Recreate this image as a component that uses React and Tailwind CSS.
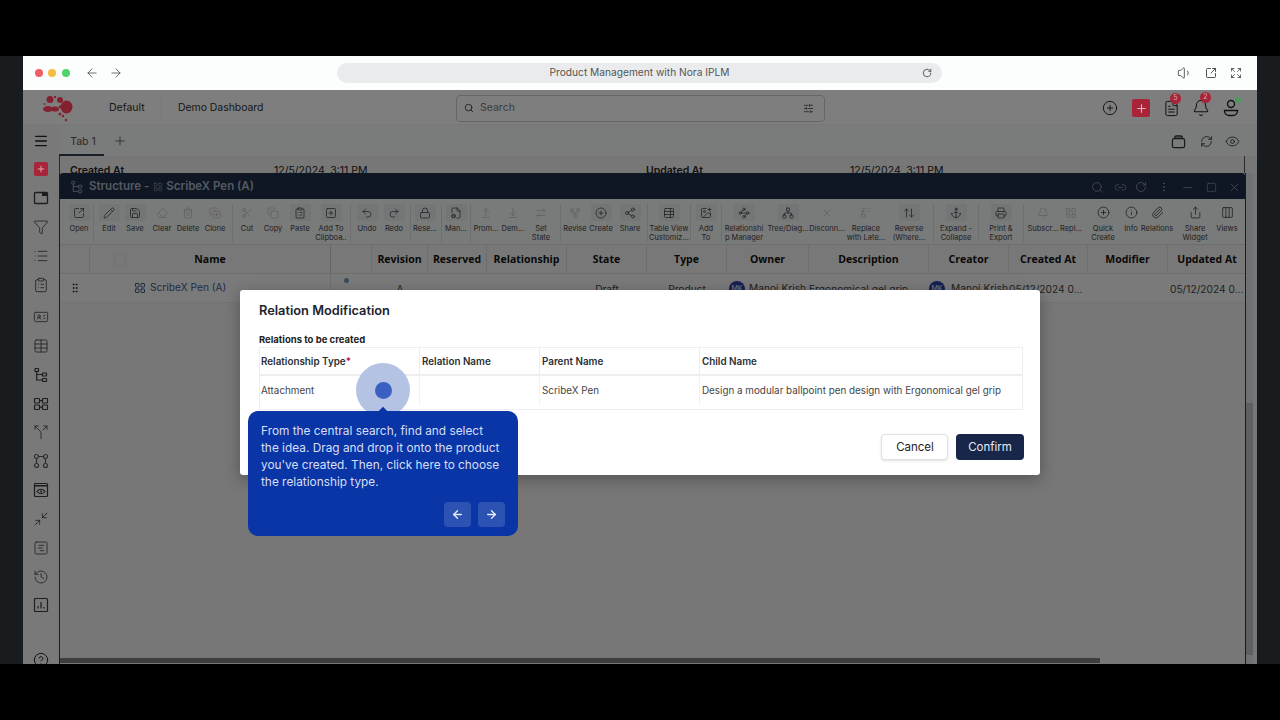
import React from "react";
import {
  ArrowLeft, ArrowRight, RotateCw, Volume1, SquareArrowOutUpRight, Search, SlidersHorizontal, CirclePlus, Plus, FileText, Bell, Menu, RefreshCw, Eye,
  Pencil, Save, Eraser, Trash2, CopyPlus, Scissors, Copy, ClipboardList, SquarePlus, Undo2, Redo2, Lock, FileCog, ArrowUpFromLine, ArrowDownToLine, ArrowRightLeft, GitFork, Share2, TableProperties, ImagePlus, Waypoints, Network, X, Replace, ArrowUpDown, Anchor, Printer, LayoutGrid, Info, Paperclip, Share, Columns3,
  Filter, List, IdCard, Table, Split, Minimize2, SquareChartGantt, History, CircleHelp, Link2, MoreVertical, Minus, Square, GripVertical, Expand,
} from "lucide-react";

function TreeIcon({ size = 16, strokeWidth = 1.3, className = "" }) {
  return (
    <svg width={size} height={size} viewBox="0 0 16 16" fill="none" stroke="currentColor" strokeWidth={strokeWidth} className={className}>
      <rect x="2" y="1.5" width="3.5" height="3" rx="0.6" /><rect x="9.5" y="6" width="4" height="3" rx="0.6" /><rect x="9.5" y="11.5" width="4" height="3" rx="0.6" />
      <path d="M3.7 4.5V13H9.5M3.7 7.5H9.5" />
    </svg>
  );
}
function WindowIcon({ size = 16, className = "" }) {
  return (
    <svg width={size} height={size} viewBox="0 0 16 16" fill="none" stroke="currentColor" strokeWidth="1.3" className={className}>
      <rect x="1.5" y="2.5" width="13" height="11" rx="1" /><path d="M9 3h5v3H9z" fill="currentColor" stroke="none" />
    </svg>
  );
}
function GridIcon({ size = 16, className = "" }) {
  return (
    <svg width={size} height={size} viewBox="0 0 16 16" fill="none" stroke="currentColor" strokeWidth="1.2" className={className}>
      <rect x="1.5" y="2.5" width="5" height="4.5" rx="0.8" /><rect x="9.5" y="2.5" width="5" height="4.5" rx="0.8" /><rect x="1.5" y="9" width="5" height="4.5" rx="0.8" /><rect x="9.5" y="9" width="5" height="4.5" rx="0.8" /><path d="M6.5 4.7h3M6.5 11.2h3" />
    </svg>
  );
}
function NodesIcon({ size = 16, className = "" }) {
  return (
    <svg width={size} height={size} viewBox="0 0 16 16" fill="none" stroke="#5a5a5a" strokeWidth="1.2" className={className}>
      <circle cx="3.5" cy="3.5" r="2" /><circle cx="12.5" cy="3.5" r="2" /><circle cx="3.5" cy="12.5" r="2" /><circle cx="12.5" cy="12.5" r="2" /><path d="M5.5 3.5h5M3.5 5.5v5M12.5 5.5v5" />
    </svg>
  );
}
function EyeWindowIcon({ size = 16, className = "" }) {
  return (
    <svg width={size} height={size} viewBox="0 0 16 16" fill="none" stroke="currentColor" strokeWidth="1.2" className={className}>
      <rect x="1.5" y="1.5" width="13" height="13" rx="1" /><path d="M2 3h12v1.5H2z" fill="currentColor" stroke="none" /><path d="M4 9.5c2.2-3 5.8-3 8 0-2.2 3-5.8 3-8 0z" /><circle cx="8" cy="9.5" r="1" fill="currentColor" stroke="none" />
    </svg>
  );
}
function ChartBoxIcon({ size = 16, className = "" }) {
  return (
    <svg width={size} height={size} viewBox="0 0 16 16" fill="none" stroke="currentColor" strokeWidth="1.2" className={className}>
      <rect x="1.5" y="1.5" width="13" height="13" rx="1" /><path d="M5 11.5V9M8 11.5V5M11 11.5v-1.5" />
    </svg>
  );
}
function CaseIcon({ size = 16, className = "" }) {
  return (
    <svg width={size} height={size} viewBox="0 0 16 16" fill="none" stroke="currentColor" strokeWidth="1.3" className={className}>
      <rect x="1.5" y="5" width="13" height="9.5" rx="1.8" /><path d="M4 5V3.5C4 2.5 4.8 2 5.5 2h5c.7 0 1.5.5 1.5 1.5V5" fill="currentColor" fillOpacity="0.45" />
    </svg>
  );
}
function PersonIcon({ size = 18, className = "" }) {
  return (
    <svg width={size} height={size} viewBox="0 0 18 18" fill="none" stroke="currentColor" strokeWidth="1.4" className={className}>
      <circle cx="9" cy="5" r="3.5" /><path d="M2.5 11.5h13c0 3.5-2.5 5-4.5 5H7c-2 0-4.5-1.5-4.5-5z" />
    </svg>
  );
}

const groups = [
  { cls: "w-[29px]", items: [["Open", SquareArrowOutUpRight, "w-[28px]"]] },
  { cls: "w-[139px]", items: [["Edit", Pencil, "w-[30px]"], ["Save", Save, "w-[22px]"], ["Clear", Eraser, "w-[32px]", 1], ["Delete", Trash2, "w-[20px]", 1], ["Clone", CopyPlus, "w-[34px]", 1]] },
  { cls: "w-[118px]", items: [["Cut", Scissors, "w-[28px]", 1], ["Copy", Copy, "w-[24px]", 1], ["Paste", ClipboardList, "w-[30px]"], ["Add To\nClipboa..", SquarePlus, "w-[32px]"]] },
  { cls: "w-[60px]", items: [["Undo", Undo2, "w-[32px]"], ["Redo", Redo2, "w-[22px]"]] },
  { cls: "w-[31px]", items: [["Rese...", Lock, "w-[28px]"]] },
  { cls: "w-[29px]", items: [["Man...", FileCog, "w-[28px]"]] },
  { cls: "w-[90px]", items: [["Prom...", ArrowUpFromLine, "w-[30px]", 1], ["Dem...", ArrowDownToLine, "w-[24px]", 1], ["Set\nState", ArrowRightLeft, "w-[32px]", 1]] },
  { cls: "w-[87px]", items: [["Revise", GitFork, "w-[28px]", 1], ["Create", CirclePlus, "w-[24px]"], ["Share", Share2, "w-[34px]"]] },
  { cls: "w-[43px]", items: [["Table View\nCustomiz...", TableProperties, "w-[42px]"]] },
  { cls: "w-[31px]", items: [["Add\nTo", ImagePlus, "w-[30px]"]] },
  { cls: "w-[212px]", items: [["Relationshi\np Manager", Waypoints, "w-[44px]"], ["Tree/Diag...", Network, "w-[44px]"], ["Disconn...", X, "w-[34px]", 1], ["Replace\nwith Late...", Replace, "w-[44px]", 1], ["Reverse\n(Where...", ArrowUpDown, "w-[42px]"]] },
  { cls: "w-[45px]", items: [["Expand -\nCollapse", Anchor, "w-[44px]"]] },
  { cls: "w-[45px]", items: [["Print &\nExport", Printer, "w-[44px]"]] },
  { cls: "w-[56px]", bare: true, items: [["Subscr...", Bell, "w-[38px]", 1], ["Repl...", LayoutGrid, "w-[18px]", 1]] },
  { cls: "w-[162px]", bare: true, tight: true, items: [["Quick\nCreate", CirclePlus, "w-[46px]"], ["Info", Info, "w-[10px]"], ["Relations", Paperclip, "w-[42px]"], ["Share\nWidget", Share, "w-[34px]"], ["Views", Columns3, "w-[30px]"]] },
];

const side = [
  [WindowIcon, "mt-0"], [Filter, "mt-[13px]"], [List, "mt-[13px]"], [ClipboardList, "mt-[13px]"], [IdCard, "mt-[16px]"], [Table, "mt-[13px]"], [TreeIcon, "mt-[13px]"], [GridIcon, "mt-[13px]"], [Split, "mt-[12px]"], [NodesIcon, "mt-[13px]"], [EyeWindowIcon, "mt-[13px]"], [Minimize2, "mt-[13px]"], [SquareChartGantt, "mt-[13px]"], [History, "mt-[13px]"], [ChartBoxIcon, "mt-[12px]"],
];

const heads = [
  ["", "w-[41px]"], ["Revision", "w-[56px]"], ["Reserved", "w-[59px]"], ["Relationship", "w-[80px]"], ["State", "w-[80px]"], ["Type", "w-[80px]"], ["Owner", "w-[82px]"], ["Description", "w-[120px]"], ["Creator", "w-[80px]"], ["Created At", "w-[79px]"], ["Modifier", "w-[80px]"], ["Updated At", "w-[79px]"],
];

function Tool({ item, tight }) {
  const [label, Icon, w, off] = item;
  const lines = label.split("\n");
  return (
    <div className={`${w} flex flex-col items-center shrink-0`}>
      <div className={`h-[17px] w-[21px] flex items-center justify-center ${off || tight ? "" : "bg-[#e9ebec]"}`}>
        <Icon className={off ? "text-[#bcbcbc]" : "text-[#333333]"} size={tight ? 13 : 12} strokeWidth={1.4} />
      </div>
      <div className="mt-[3px] leading-[9px] text-[7.5px] text-center whitespace-nowrap text-[#444444]">
        {lines.map((l) => <div key={l}>{l}</div>)}
      </div>
    </div>
  );
}

function Avatar() {
  return <span className="w-[16px] h-[16px] rounded-full bg-[#2f3fa8] text-white text-[7px] flex items-center justify-center shrink-0">MK</span>;
}

export default function App() {
  return (
    <div className="h-screen w-full bg-black flex flex-col overflow-hidden font-['Inter',sans-serif]">
      <div className="h-[56px] shrink-0" />
      <div className="h-[608px] flex shrink-0">
        <div className="w-[23px] bg-[#181c1e]" />
        <div className="w-[1234px] flex flex-col bg-white relative overflow-hidden">
          {/* browser bar */}
          <div className="h-[34px] shrink-0 flex items-center pl-[12px] pr-[12px] bg-[#fcfdfd]">
            <span className="w-[8px] h-[8px] rounded-full bg-[#ee5f64]" />
            <span className="w-[8px] h-[8px] rounded-full bg-[#f5bd3f] ml-[5px]" />
            <span className="w-[8px] h-[8px] rounded-full bg-[#4fd36f] ml-[6px]" />
            <ArrowLeft size={14} strokeWidth={1.3} className="ml-[15px] text-[#444]" />
            <ArrowRight size={14} strokeWidth={1.3} className="ml-[10px] text-[#444]" />
            <div className="ml-[214px] w-[605px] h-[20px] rounded-full bg-[#e9ebed] relative flex items-center justify-center text-[10.2px] text-[#555]">
              Product Management with Nora IPLM
              <RotateCw size={10} strokeWidth={2} className="absolute right-[10px] text-[#444]" />
            </div>
            <Volume1 size={16} strokeWidth={1.3} className="ml-[235px] text-[#444]" />
            <SquareArrowOutUpRight size={12} strokeWidth={1.7} className="ml-[12px] text-[#333]" />
            <Expand size={12} strokeWidth={1.5} className="ml-[13px] text-[#333]" />
          </div>

          {/* app header */}
          <div className="h-[35px] shrink-0 flex items-center pt-[2px] bg-[#fdfdfd] border-b border-[#f1f1f1]">
            <div className="w-[86px] pl-[20px] shrink-0 relative z-20">
              <svg width="31" height="27" viewBox="0 0 31 27" fill="#84212f">
                <ellipse cx="5" cy="14" rx="5" ry="3" /><ellipse cx="12" cy="14" rx="4" ry="2.6" /><ellipse cx="23.5" cy="12" rx="6" ry="6.5" /><circle cx="7" cy="4.5" r="3.5" /><circle cx="17" cy="5" r="3" /><circle cx="12" cy="2" r="1.2" /><circle cx="1.5" cy="9" r="1" /><circle cx="17" cy="12" r="1.4" /><circle cx="17" cy="19" r="1.5" /><circle cx="20" cy="21" r="1.2" /><circle cx="23" cy="25" r="1.2" />
              </svg>
            </div>
            <div className="w-[36px] text-[10.5px] text-[#333] pr-[16px] border-r border-[#f1f1f1] h-[26px] flex items-center box-content shrink-0">Default</div>
            <div className="ml-[16px] w-[278px] text-[10.4px] text-[#333] shrink-0">Demo Dashboard</div>
            <div className="w-[369px] h-[27px] rounded-[4px] border border-[#cccccc] flex items-center px-[6px] text-[10.5px] text-[#777] shrink-0">
              <Search size={10} className="mr-[6px] ml-[1px] text-[#333]" />Search
              <SlidersHorizontal size={11} className="ml-auto mr-[4px] text-[#555]" />
            </div>
            <CirclePlus size={16} strokeWidth={1.4} className="ml-[277px] text-[#222] shrink-0" />
            <div className="ml-[14px] w-[18px] h-[18px] rounded-[2px] bg-[#a82439] relative z-20 flex items-center justify-center shrink-0"><Plus size={13} className="text-[#e8b8c0]" /></div>
            <div className="ml-[13px] relative shrink-0">
              <FileText size={17} strokeWidth={1.4} className="text-[#222]" />
              <span className="absolute -top-[7px] left-[7px] w-[11px] h-[11px] rounded-full bg-[#a82439] z-20 text-[#d8a8b0] text-[7px] flex items-center justify-center">5</span>
            </div>
            <div className="ml-[12px] relative shrink-0">
              <Bell size={18} strokeWidth={1.4} className="text-[#222]" />
              <span className="absolute -top-[7px] left-[8px] w-[11px] h-[11px] rounded-full bg-[#a82439] z-20 text-[#d8a8b0] text-[7px] flex items-center justify-center">2</span>
            </div>
            <div className="ml-[12px] relative shrink-0">
              <PersonIcon size={18} className="text-[#222]" />
              <span className="absolute -top-[2px] left-[13px] w-[6px] h-[6px] rounded-full bg-[#4b9a5c] z-20" />
            </div>
          </div>

          {/* body */}
          <div className="flex-1 flex min-h-0 bg-[#eeeeee]">
            <div className="w-[36px] shrink-0 flex flex-col items-center pt-[8px] pb-[4px] bg-[#f2f3f3]">
              <Menu size={16} strokeWidth={2} className="text-[#222] shrink-0" />
              <div className="mt-[13px] w-[14px] h-[14px] rounded-[2px] bg-[#a82439] relative z-20 flex items-center justify-center shrink-0"><Plus size={10} className="text-[#e8b8c0]" /></div>
              <div className="flex flex-col items-center mt-[14px]">
                {side.map(([Icon, m], i) => <Icon key={i} size={16} strokeWidth={1.2} className={`${m} text-[#3a3a3a]`} />)}
              </div>
              <CircleHelp size={16} strokeWidth={1.5} className="mt-auto -mb-[8px] text-[#222] shrink-0" />
            </div>

            <div className="flex-1 min-w-0 flex flex-col">
              <div className="h-[31px] shrink-0 flex items-center pt-[1px] bg-[#f5f6f6] relative">
                <div className="w-[45px] h-[30px] flex items-center justify-center pt-[3px] pl-[3px] text-[10.5px] text-[#555] border-b-2 border-[#334155]">Tab 1</div>
                <Plus size={14} strokeWidth={1.2} className="ml-[9px] text-[#333]" />
                <CaseIcon size={15} className="ml-auto text-[#333]" />
                <RefreshCw size={13} strokeWidth={1.6} className="ml-[14px] text-[#333]" />
                <Eye size={15} strokeWidth={1.4} className="ml-[12px] mr-[17px] text-[#333]" />
              </div>
              <div className="h-[18px] shrink-0 mr-[12px] border-l border-r border-[#555] rounded-bl-[3px] flex items-end overflow-hidden text-[10.5px] text-[#222] leading-[13px] -mb-px">
                <div className="w-[214px] pl-[10px] font-semibold -mb-[3px] shrink-0">Created At</div>
                <div className="w-[372px] -mb-[3px] shrink-0">12/5/2024, 3:11 PM</div>
                <div className="w-[204px] font-semibold -mb-[3px] shrink-0">Updated At</div>
                <div className="-mb-[3px]">12/5/2024, 3:11 PM</div>
              </div>

              {/* structure widget */}
              <div className="flex-1 min-h-0 flex">
                <div className="w-[1187px] shrink-0 flex flex-col border-l border-r border-[#243a52] bg-[#eeeeee] overflow-hidden">
                  <div className="h-[26px] shrink-0 bg-[#1f2d48] rounded-t-[3px] flex items-center pt-[2px] pl-[10px] pr-[4px] text-[#98a3b3]">
                    <TreeIcon size={14} strokeWidth={1.1} />
                    <span className="ml-[5px] font-semibold text-[11.5px] text-[#a9b4c3]">Structure - </span>
                    <LayoutGrid size={10} strokeWidth={1.4} className="ml-[4px]" />
                    <span className="ml-[3px] font-semibold text-[11.5px] text-[#a9b4c3]">ScribeX Pen (A)</span>
                    <Search size={13} strokeWidth={1.3} className="ml-auto" />
                    <Link2 size={13} strokeWidth={1.3} className="ml-[10px]" />
                    <RotateCw size={12} strokeWidth={1.6} className="ml-[8px]" />
                    <MoreVertical size={12} strokeWidth={1.5} className="ml-[11px]" />
                    <Minus size={13} strokeWidth={1.3} className="ml-[11px]" />
                    <Square size={11} strokeWidth={1.4} className="ml-[12px]" />
                    <X size={13} strokeWidth={1.4} className="ml-[11px]" />
                  </div>
                  <div className="h-[46px] shrink-0 flex pl-[5px] pt-[5px] border-b border-[#dddddd] bg-[#f3f4f4] overflow-hidden">
                    {groups.map((g, i) => (
                      <div key={i} className={`${g.cls} shrink-0 flex h-[38px] ${g.bare ? "" : "border-r border-[#dddddd]"}`}>
                        {g.items.map((it) => <Tool key={it[0]} item={it} tight={g.tight} />)}
                      </div>
                    ))}
                  </div>
                  <div className="h-[29px] shrink-0 flex border-b border-[#dddddd] bg-[#f1f1f1] text-[10.5px] font-bold text-[#111] font-['Open_Sans',sans-serif]">
                    <div className="w-[30px] border-r border-[#dddddd] shrink-0" />
                    <div className="w-[241px] border-r border-[#cccccc] shrink-0 flex items-center justify-center relative pt-[2px]">
                      <span className="absolute left-[24px] w-[12px] h-[12px] rounded-[2px] border border-[#e2e2e2]" />Name
                    </div>
                    {heads.map(([h, w]) => <div key={h || "x"} className={`${w} shrink-0 border-r border-[#dddddd] flex items-center justify-center pt-[2px] whitespace-nowrap`}>{h}</div>)}
                  </div>
                  <div className="h-[29px] shrink-0 flex text-[10.2px] text-[#444] border-b border-[#e6e6e6] bg-[#f4f4f4]">
                    <div className="w-[30px] shrink-0 flex items-center justify-center"><GripVertical size={12} className="text-[#333]" /></div>
                    <div className="w-[241px] shrink-0 flex items-center pl-[44px] text-[#3f5a8a] border-r border-[#dddddd]"><LayoutGrid size={12} className="mr-[4px]" /> ScribeX Pen (A)</div>
                    <div className="w-[41px] shrink-0 pl-[13px] pt-[4px]"><span className="block w-[5px] h-[5px] rounded-full bg-[#6f9ab8]" /></div>
                    <div className="w-[56px] shrink-0 text-center pt-[8px]">A</div>
                    <div className="w-[59px] shrink-0" />
                    <div className="w-[80px] shrink-0" />
                    <div className="w-[80px] shrink-0 text-center pt-[8px]">Draft</div>
                    <div className="w-[80px] shrink-0 text-center pt-[8px]">Product</div>
                    <div className="w-[82px] shrink-0 flex items-start pt-[7px] pl-[2px] gap-[4px] whitespace-nowrap overflow-hidden"><Avatar />Manoj Krish</div>
                    <div className="w-[120px] shrink-0 pt-[8px] whitespace-nowrap">Ergonomical gel grip</div>
                    <div className="w-[80px] shrink-0 flex items-start pt-[7px] gap-[6px] whitespace-nowrap overflow-hidden"><Avatar />Manoj Krish</div>
                    <div className="w-[79px] shrink-0 pt-[8px] whitespace-nowrap">05/12/2024 0...</div>
                    <div className="w-[80px] shrink-0" />
                    <div className="w-[79px] shrink-0 pt-[8px] pl-[2px] whitespace-nowrap">05/12/2024 0...</div>
                  </div>
                  <div className="flex-1 bg-[#eeeeee] flex flex-col justify-end">
                    <div className="h-[5px] w-[1040px] bg-[#7c7c7c] mb-[1px]" />
                  </div>
                </div>
                <div className="w-[7px] shrink-0 bg-[#dfe3e4] flex flex-col">
                  <div className="h-[230px]" />
                  <div className="h-[252px] bg-[#b9c2c4]" />
                </div>
              </div>
            </div>
          </div>

          {/* scrim */}
          <div className="absolute left-0 right-0 top-[34px] bottom-0 bg-black/50 z-10" />

          {/* dialog */}
          <div className="absolute left-[217px] top-[234px] w-[800px] h-[185px] bg-white rounded-[3px] z-30 shadow-[0_4px_16px_rgba(0,0,0,0.3)] pt-[12px] pl-[19px] pr-[17px] flex flex-col">
            <div className="text-[12.8px] font-semibold text-[#1c2430] leading-[17px]">Relation Modification</div>
            <div className="mt-[14px] text-[9.5px] font-bold text-[#222] leading-[13px]">Relations to be created</div>
            <div className="mt-[1px] border border-[#eeeeee] text-[9.85px] h-[63px]">
              <div className="h-[28px] flex border-b-2 border-[#eeeeee] font-semibold text-[#2b2f36] items-center">
                <div className="w-[160px] pl-[1px] h-full flex items-center border-r border-[#eeeeee]">Relationship Type<span className="text-[#b3203a]">*</span></div>
                <div className="w-[120px] pl-[2px] h-full flex items-center border-r border-[#eeeeee]">Relation Name</div>
                <div className="w-[160px] pl-[2px] h-full flex items-center border-r border-[#eeeeee]">Parent Name</div>
                <div className="pl-[2px]">Child Name</div>
              </div>
              <div className="h-[29px] flex text-[#444] items-center">
                <div className="w-[160px] pl-[1px] h-full flex items-center border-r border-[#f3f3f3]">Attachment</div>
                <div className="w-[120px] pl-[2px] h-full border-r border-[#f3f3f3]" />
                <div className="w-[160px] pl-[2px] h-full flex items-center border-r border-[#f3f3f3]">ScribeX Pen</div>
                <div className="pl-[2px]">Design a modular ballpoint pen design with Ergonomical gel grip</div>
              </div>
            </div>
            <div className="mt-[24px] flex justify-end gap-[8px] text-[11.5px]">
              <button className="w-[67px] h-[26px] pt-[1px] pl-[1px] rounded-[4px] border border-[#dfe3e6] bg-white text-[#222] shadow-sm">Cancel</button>
              <button className="w-[68px] h-[26px] pt-[1px] rounded-[4px] bg-[#172649] text-[#e7ebf2] -mr-[1px]">Confirm</button>
            </div>
          </div>

          {/* tour pulse */}
          <div className="absolute left-[333px] top-[307px] w-[54px] h-[54px] rounded-full bg-[#b4c2e4] z-40 flex items-center justify-center">
            <span className="w-[17px] h-[17px] rounded-full bg-[#3a60c4]" />
          </div>

          {/* tour popover */}
          <div className="absolute left-[225px] top-[355px] w-[270px] h-[125px] rounded-[10px] bg-[#0a35a6] z-40 pl-[13px] pt-[12px] flex flex-col">
            <span className="absolute left-[132px] -top-[3px] w-[6px] h-[6px] bg-[#0a35a6] rotate-45" />
            <div className="w-[241px] text-[11.85px] leading-[17px] text-[#d6dff6]">From the central search, find and select the idea. Drag and drop it onto the product you've created. Then, click here to choose the relationship type.</div>
            <div className="mt-auto mb-[9px] mr-[13px] flex justify-end gap-[7px]">
              <div className="w-[27px] h-[25px] rounded-[4px] bg-[#2c52b4] flex items-center justify-center"><ArrowLeft size={13} strokeWidth={2.5} className="text-[#e6ecfb]" /></div>
              <div className="w-[27px] h-[25px] rounded-[4px] bg-[#2c52b4] flex items-center justify-center"><ArrowRight size={13} strokeWidth={2.5} className="text-[#e6ecfb]" /></div>
            </div>
          </div>
        </div>
        <div className="flex-1 bg-[#181c1e]" />
      </div>
    </div>
  );
}
